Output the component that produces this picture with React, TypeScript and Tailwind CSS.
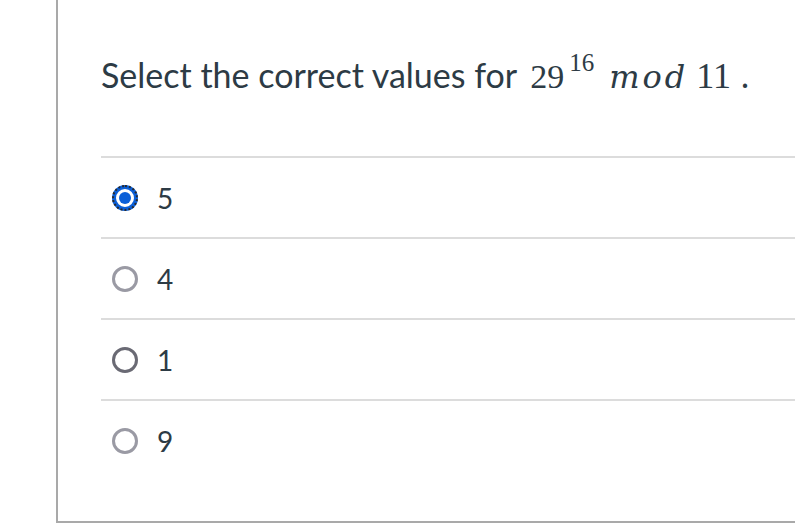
import React from 'react';

const options = [
  { label: '5', state: 'checked' },
  { label: '4', state: 'idle' },
  { label: '1', state: 'hover' },
  { label: '9', state: 'idle' },
] as const;

function Radio({ state }: { state: 'checked' | 'idle' | 'hover' }) {
  if (state === 'checked') {
    return (
      <span className="flex h-[26px] w-[26px] items-center justify-center rounded-full border-[4px] border-[#0b5fd8] bg-white outline-2 outline-dotted outline-offset-[-2px] outline-[#2a2a2a]">
        <span className="h-[12px] w-[12px] rounded-full bg-[#0b5fd8]" />
      </span>
    );
  }
  return (
    <span
      className={`h-[26px] w-[26px] rounded-full border-[3px] bg-white ${
        state === 'hover' ? 'border-[#6a6a74]' : 'border-[#9a9aa4]'
      }`}
    />
  );
}

export default function App() {
  return (
    <div className="h-[525px] w-[795px] overflow-hidden bg-white font-['Lato','Liberation_Sans',sans-serif] text-[#2d3b45]">
      <div className="ml-[56px] h-[523px] border-b-2 border-l-2 border-[#a9a9a9] pl-[43px] pt-[55px]">
        <h1 className="h-[40px] text-[34px] font-normal leading-[40px] whitespace-nowrap">
          Select the correct values for
          <span className="ml-[13px] font-['Liberation_Serif',serif] text-[34px]">
            29
            <span className="relative top-[-17px] ml-[5px] text-[25px]">16</span>
            <span className="ml-[15px] font-['DejaVu_Serif',serif] text-[32px] italic tracking-[3px]">mod</span>
            <span className="ml-[8px] text-[36px]">11</span>
          </span>
          <span className="ml-[10px]">.</span>
        </h1>
        <div className="mt-[61px]">
          {options.map(o => (
            <div
              key={o.label}
              className="flex h-[81px] items-center border-t-2 border-[#dcdcdc] pl-[11px]"
            >
              <Radio state={o.state} />
              <span className="ml-[19px] text-[28px] leading-none">{o.label}</span>
            </div>
          ))}
        </div>
      </div>
    </div>
  );
}
